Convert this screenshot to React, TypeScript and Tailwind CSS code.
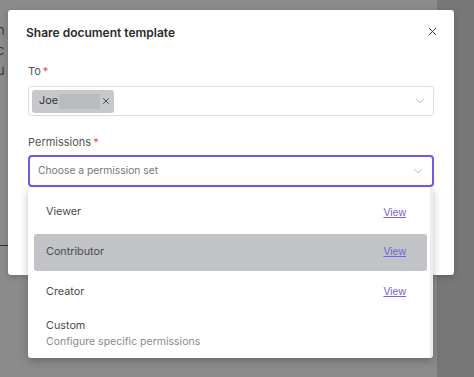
import React from 'react';
import { X, ChevronDown } from 'lucide-react';

const font = { fontFamily: 'Inter, "Noto Sans", sans-serif' };

const Option: React.FC<{ label: string; hint?: string; view?: boolean; active?: boolean }> = ({
  label,
  hint,
  view,
  active,
}) => (
  <div
    className={`ml-[6px] mr-[3px] flex items-center justify-between rounded-[3px] pl-[12px] pr-[21px] ${
      hint ? 'h-[48px]' : 'h-[37px]'
    } ${active ? 'bg-[#c1c3c6]' : ''}`}
  >
    <div className="flex flex-col">
      <span className="text-[10.8px] leading-[16px] text-[#4a4a4a]">{label}</span>
      {hint && <span className="text-[10.5px] leading-[16px] text-[#8a8a8a]">{hint}</span>}
    </div>
    {view && (
      <a
        className="text-[10.5px] text-[#7266d6] underline"
        style={{ fontFamily: '"Liberation Sans", Arial, sans-serif' }}
      >
        View
      </a>
    )}
  </div>
);

export default function App() {
  return (
    <div className="relative flex h-[377px] w-[474px] overflow-hidden bg-[#8b8b8b]" style={font}>
      {/* page behind the overlay */}
      <div className="flex flex-1 flex-col">
        <div className="-ml-[3px] flex flex-col gap-[4px] pt-[22px] text-[13px] leading-[16px] text-[#3a3a3a]">
          <span>n</span>
          <span>c</span>
          <span>u</span>
        </div>
        <div className="mt-[167px] h-px w-[8px] bg-[#333]" />
      </div>
      <div className="w-[37px] bg-[#777]" />

      {/* modal */}
      <div className="absolute left-[8px] top-[10px] h-[265px] w-[446px] rounded-[3px] bg-white shadow-[0_2px_6px_rgba(0,0,0,0.2)]">
        <div className="flex flex-col px-[20px] pt-[13px]">
          <div className="flex items-center justify-between">
            <h2 className="ml-[-2px] text-[12px] font-semibold leading-[20px] text-[#2a2a2a]">
              Share document template
            </h2>
            <X className="mr-[-5px] mt-[-3px] h-[13px] w-[13px] text-[#333]" strokeWidth={1.8} />
          </div>

          <label className="mt-[20px] text-[11px] leading-[16px] text-[#555]">
            To<span className="ml-[2px] text-[#e05050]">*</span>
          </label>
          <div className="mt-[7px] flex h-[30px] items-center justify-between rounded-[3px] border border-[#dedede] pl-[3px] pr-[6px]">
            <div className="flex h-[23px] items-center rounded-[3px] bg-[#c6c8cb] pl-[7px] pr-[3px]">
              <span className="text-[10.8px] text-[#333]">Joe</span>
              <span className="mx-[1px] h-[15px] w-[41px] bg-[#b9bbbe]" />
              <X className="h-[10px] w-[10px] text-[#333]" strokeWidth={2} />
            </div>
            <ChevronDown className="h-[14px] w-[14px] text-[#999]" strokeWidth={1.2} />
          </div>

          <label className="mt-[18px] text-[11px] leading-[16px] text-[#555]">
            Permissions<span className="ml-[2px] text-[#e05050]">*</span>
          </label>
          <div className="relative mt-[5px]">
            <div className="flex h-[32px] items-center justify-between rounded-[4px] border-2 border-[#6b5ce7] pl-[8px] pr-[7px]">
              <span className="text-[10.3px] text-[#777]">Choose a permission set</span>
              <ChevronDown className="h-[14px] w-[14px] text-[#999]" strokeWidth={1.2} />
            </div>

            {/* dropdown menu */}
            <div className="absolute left-0 right-[1px] top-[33px] flex h-[170px] flex-col rounded-b-[3px] border-r-[3px] border-[#eeeeee] bg-white pt-[6px] shadow-[0_3px_8px_rgba(0,0,0,0.25)]">
              <Option label="Viewer" view />
              <div className="h-[3px]" />
              <Option label="Contributor" view active />
              <div className="h-[3px]" />
              <Option label="Creator" view />
              <Option label="Custom" hint="Configure specific permissions" />
            </div>
          </div>
        </div>
      </div>
    </div>
  );
}
